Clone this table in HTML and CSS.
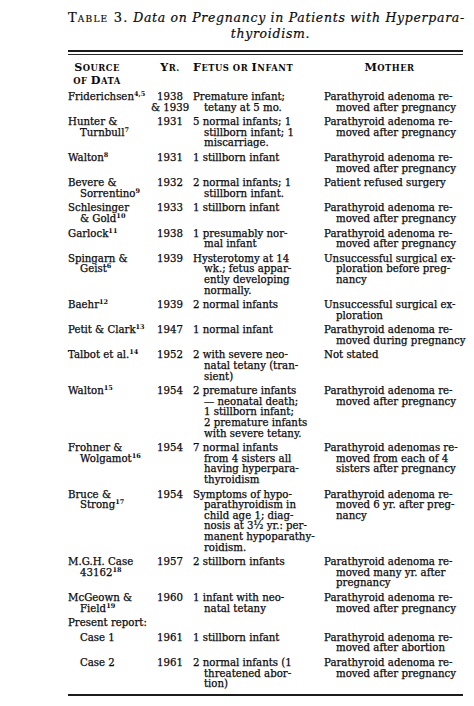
FILE: index.html
```html
<!DOCTYPE html>
<html>
<head>
<meta charset="utf-8">
<link rel="stylesheet" href="styles.css">
</head>
<body>
<div class="page">
  <div class="caption">
    <div class="cap-line1"><span class="label">Table 3.</span> <em>Data on Pregnancy in Patients with Hyperpara-</em></div>
    <div class="cap-line2"><em>thyroidism.</em></div>
  </div>
  <div class="rule-double"></div>
  <table class="data">
    <colgroup>
      <col class="c-src"><col class="c-yr"><col class="c-fetus"><col class="c-mother">
    </colgroup>
    <thead>
      <tr>
        <th class="h-src"><span class="hl"><span class="ini">S</span><span class="sc">ource</span></span><span class="hl"><span class="sc">of </span><span class="ini">D</span><span class="sc">ata</span></span></th>
        <th class="h-yr"><span class="ini">Y</span><span class="sc">r.</span></th>
        <th class="h-fetus"><span class="ini">F</span><span class="sc">etus or </span><span class="ini">I</span><span class="sc">nfant</span></th>
        <th class="h-mother"><span class="ini">M</span><span class="sc">other</span></th>
      </tr>
    </thead>
    <tbody>
      <tr>
        <td class="src">Friderichsen<sup>4,5</sup></td>
        <td class="yr">1938<br>&amp; 1939</td>
        <td class="fetus">Premature infant;<br>tetany at 5 mo.</td>
        <td class="mother">Parathyroid adenoma re-<br>moved after pregnancy</td>
      </tr>
      <tr>
        <td class="src">Hunter &amp;<br>Turnbull<sup>7</sup></td>
        <td class="yr">1931</td>
        <td class="fetus">5 normal infants; 1<br>stillborn infant; 1<br>miscarriage.</td>
        <td class="mother">Parathyroid adenoma re-<br>moved after pregnancy</td>
      </tr>
      <tr>
        <td class="src">Walton<sup>8</sup></td>
        <td class="yr">1931</td>
        <td class="fetus">1 stillborn infant</td>
        <td class="mother">Parathyroid adenoma re-<br>moved after pregnancy</td>
      </tr>
      <tr>
        <td class="src">Bevere &amp;<br>Sorrentino<sup>9</sup></td>
        <td class="yr">1932</td>
        <td class="fetus">2 normal infants; 1<br>stillborn infant.</td>
        <td class="mother">Patient refused surgery</td>
      </tr>
      <tr>
        <td class="src">Schlesinger<br>&amp; Gold<sup>10</sup></td>
        <td class="yr">1933</td>
        <td class="fetus">1 stillborn infant</td>
        <td class="mother">Parathyroid adenoma re-<br>moved after pregnancy</td>
      </tr>
      <tr>
        <td class="src">Garlock<sup>11</sup></td>
        <td class="yr">1938</td>
        <td class="fetus">1 presumably nor-<br>mal infant</td>
        <td class="mother">Parathyroid adenoma re-<br>moved after pregnancy</td>
      </tr>
      <tr>
        <td class="src">Spingarn &amp;<br>Geist<sup>6</sup></td>
        <td class="yr">1939</td>
        <td class="fetus">Hysterotomy at 14<br>wk.; fetus appar-<br>ently developing<br>normally.</td>
        <td class="mother">Unsuccessful surgical ex-<br>ploration before preg-<br>nancy</td>
      </tr>
      <tr>
        <td class="src">Baehr<sup>12</sup></td>
        <td class="yr">1939</td>
        <td class="fetus">2 normal infants</td>
        <td class="mother">Unsuccessful surgical ex-<br>ploration</td>
      </tr>
      <tr>
        <td class="src">Petit &amp; Clark<sup>13</sup></td>
        <td class="yr">1947</td>
        <td class="fetus">1 normal infant</td>
        <td class="mother">Parathyroid adenoma re-<br>moved during pregnancy</td>
      </tr>
      <tr>
        <td class="src">Talbot et al.<sup>14</sup></td>
        <td class="yr">1952</td>
        <td class="fetus">2 with severe neo-<br>natal tetany (tran-<br>sient)</td>
        <td class="mother">Not stated</td>
      </tr>
      <tr>
        <td class="src">Walton<sup>15</sup></td>
        <td class="yr">1954</td>
        <td class="fetus">2 premature infants<br>— neonatal death;<br>1 stillborn infant;<br>2 premature infants<br>with severe tetany.</td>
        <td class="mother">Parathyroid adenoma re-<br>moved after pregnancy</td>
      </tr>
      <tr>
        <td class="src">Frohner &amp;<br>Wolgamot<sup>16</sup></td>
        <td class="yr">1954</td>
        <td class="fetus">7 normal infants<br>from 4 sisters all<br>having hyperpara-<br>thyroidism</td>
        <td class="mother">Parathyroid adenomas re-<br>moved from each of 4<br>sisters after pregnancy</td>
      </tr>
      <tr>
        <td class="src">Bruce &amp;<br>Strong<sup>17</sup></td>
        <td class="yr">1954</td>
        <td class="fetus">Symptoms of hypo-<br>parathyroidism in<br>child age 1; diag-<br>nosis at 3½ yr.: per-<br>manent hypoparathy-<br>roidism.</td>
        <td class="mother">Parathyroid adenoma re-<br>moved 6 yr. after preg-<br>nancy</td>
      </tr>
      <tr>
        <td class="src">M.G.H. Case<br>43162<sup>18</sup></td>
        <td class="yr">1957</td>
        <td class="fetus">2 stillborn infants</td>
        <td class="mother">Parathyroid adenoma re-<br>moved many yr. after<br>pregnancy</td>
      </tr>
      <tr>
        <td class="src">McGeown &amp;<br>Field<sup>19</sup></td>
        <td class="yr">1960</td>
        <td class="fetus">1 infant with neo-<br>natal tetany</td>
        <td class="mother">Parathyroid adenoma re-<br>moved after pregnancy</td>
      </tr>
      <tr class="group">
        <td class="src" colspan="4">Present report:</td>
      </tr>
      <tr>
        <td class="src sub">Case 1</td>
        <td class="yr">1961</td>
        <td class="fetus">1 stillborn infant</td>
        <td class="mother">Parathyroid adenoma re-<br>moved after abortion</td>
      </tr>
      <tr class="last">
        <td class="src sub">Case 2</td>
        <td class="yr">1961</td>
        <td class="fetus">2 normal infants (1<br>threatened abor-<br>tion)</td>
        <td class="mother">Parathyroid adenoma re-<br>moved after pregnancy</td>
      </tr>
    </tbody>
  </table>
  <div class="rule-bottom"></div>
</div>
</body>
</html>
```

FILE: styles.css
```css
html, body {
  margin: 0;
  padding: 0;
  background: #ffffff;
}

body {
  font-family: "DejaVu Serif", "Liberation Serif", serif;
  color: #0a0a0a;
}

.page {
  width: 395px;
  margin-left: 68px;
  padding-top: 10px;
}

.caption {
  font-size: 12.5px;
  line-height: 15px;
  letter-spacing: 0.7px;
  -webkit-text-stroke: 0.2px #0a0a0a;
}

.cap-line1 {
  text-align: justify;
  text-align-last: justify;
  white-space: nowrap;
}

.cap-line2 {
  text-align: center;
  padding-left: 10px;
  margin-top: 1px;
}

.label {
  font-variant: small-caps;
  font-size: 13px;
  letter-spacing: 1.2px;
}

.caption em {
  font-style: italic;
}

.rule-double {
  margin-top: 9px;
  height: 2px;
  border-top: 2px solid #1c1c1c;
  border-bottom: 1.5px solid #2a2a2a;
}

.data {
  border-collapse: collapse;
  table-layout: fixed;
  width: 395px;
  font-size: 10.2px;
  line-height: 10.6px;
  -webkit-text-stroke: 0.25px #0a0a0a;
}

.c-src { width: 82px; }
.c-yr { width: 40px; }
.c-fetus { width: 134px; }
.c-mother { width: 139px; }

.data th {
  font-weight: bold;
  font-size: 8.4px;
  line-height: 13px;
  vertical-align: top;
  padding: 6px 0 5px 0;
  letter-spacing: 0.5px;
  white-space: nowrap;
  -webkit-text-stroke: 0;
}

.data th .ini {
  font-size: 11.2px;
}

.data th .sc {
  text-transform: uppercase;
}

.hl {
  display: block;
  height: 13px;
}

.h-src { text-align: center; padding-right: 24px !important; }
.h-yr { text-align: center; }
.h-fetus { text-align: left; padding-left: 3px !important; }
.h-mother { text-align: center; padding-right: 8px !important; }

.data td {
  vertical-align: top;
  padding: 0 0 4px 0;
  white-space: nowrap;
}

.data tr.last td {
  padding-bottom: 3px;
}

.src,
.mother {
  padding-left: 12px !important;
  text-indent: -12px;
}

.fetus {
  padding-left: 14px !important;
  text-indent: -11px;
}

.yr {
  text-align: center;
}

.src.sub {
  padding-left: 24px !important;
}

sup {
  font-size: 6.5px;
  line-height: 0;
  vertical-align: 4px;
  font-weight: bold;
  -webkit-text-stroke: 0;
}

.rule-bottom {
  margin-top: 1px;
  height: 2px;
  background: #1c1c1c;
}
```
